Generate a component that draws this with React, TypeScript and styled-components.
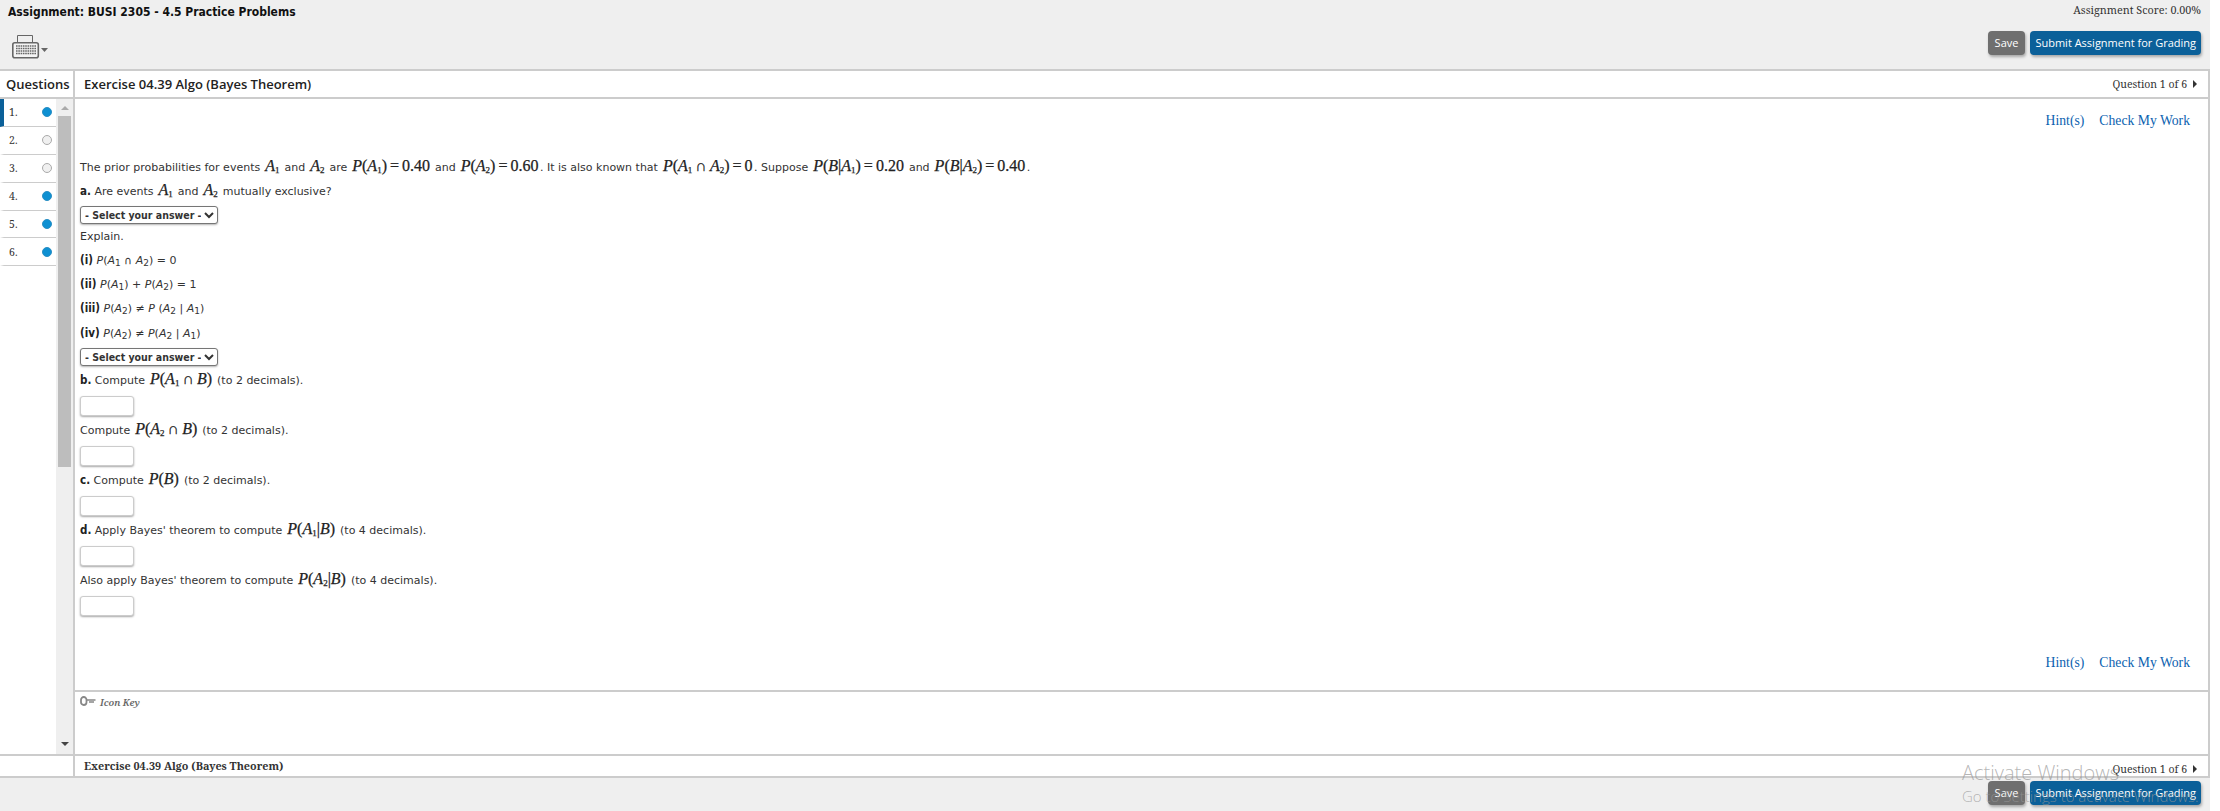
import React from "react";
import styled, { createGlobalStyle } from "styled-components";

const Global = createGlobalStyle`
  html, body { margin: 0; padding: 0; height: 100%; overflow: hidden; background: #fff; }
  #root { height: 100%; }
  * { box-sizing: border-box; }
`;

const sans = `"DejaVu Sans", sans-serif`;
const sansBold = `"DejaVu Sans Condensed", "DejaVu Sans", sans-serif`;
const heading = `"Open Sans", "Noto Sans", sans-serif`;
const serif = `"Liberation Serif", serif`;
const cambria = `"Noto Serif", "DejaVu Serif", "Liberation Serif", serif`;

const Page = styled.div`
  width: 2210px;
  height: 811px;
  position: relative;
  display: flex;
  flex-direction: column;
  font-family: ${sans};
  color: #333;
`;
const TopBar = styled.header`
  flex: none;
  height: 69px;
  background: #efefef;
  display: grid;
  grid-template-columns: 1fr auto;
  grid-template-rows: 28px 1fr;
  padding: 3px 9px 0 8px;
`;
const Title = styled.div`
  font: bold 12px/18px ${sansBold};
  color: #111;
`;
const Score = styled.div`
  font: 10.8px/14px ${cambria};
  color: #333;
  text-align: right;
`;
const Tools = styled.div`
  display: flex;
  align-items: flex-start;
  padding: 4px 0 0 4px;
`;
const Actions = styled.div<{ $top: number }>`
  display: flex;
  gap: 5px;
  justify-content: flex-end;
  align-self: start;
  padding-top: ${(p) => p.$top}px;
`;
const Btn = styled.button<{ $primary?: boolean }>`
  height: 24px;
  border: 0;
  border-radius: 4px;
  padding: 0 ${(p) => (p.$primary ? 5 : 7)}px;
  background: ${(p) => (p.$primary ? "#0b6099" : "#6f6f6f")};
  color: #fff;
  font: 400 11px/24px ${heading};
  box-shadow: 1px 2px 3px rgba(0, 0, 0, 0.3);
`;
const Frame = styled.div`
  flex: none;
  height: 709px;
  display: grid;
  grid-template-columns: 75px 1fr;
  grid-template-rows: 28px 657px 22px;
  border-top: 2px solid #ccc;
  border-right: 2px solid #ccc;
`;
const Cell = styled.div<{ $left?: boolean }>`
  border-bottom: 2px solid #ccc;
  ${(p) => (p.$left ? "border-right: 2px solid #ccc;" : "")}
`;
const QHead = styled(Cell)`
  font: 600 13px/27px ${heading};
  color: #222;
  padding-left: 6px;
`;
const ExHead = styled(Cell)`
  display: flex;
  justify-content: space-between;
  align-items: center;
  padding: 0 11px 0 9px;
`;
const ExTitle = styled.div`
  font: 600 13px/18px ${heading};
  color: #222;
`;
const ExSerif = styled.div`
  font: bold 10.8px/18px ${cambria};
  color: #333;
`;
const QCount = styled.div<{ $drop?: number }>`
  font: 10.5px/16px ${cambria};
  color: #333;
  display: flex;
  align-items: center;
  gap: 6px;
  margin-top: ${(p) => p.$drop ?? 0}px;
`;
const Tri = styled.span`
  width: 0;
  height: 0;
  border-left: 4px solid #333;
  border-top: 4px solid transparent;
  border-bottom: 4px solid transparent;
`;
const Side = styled.aside`
  border-right: 2px solid #ccc;
  border-bottom: 2px solid #ccc;
  display: flex;
  min-height: 0;
`;
const QList = styled.ol`
  list-style: none;
  margin: 0;
  padding: 0;
  width: 56px;
`;
const QItem = styled.li<{ $current?: boolean }>`
  height: 27.9px;
  border-bottom: 1px solid #ccc;
  border-left: 4px solid ${(p) => (p.$current ? "#0b6099" : "transparent")};
  padding: 0 4px 0 5px;
  display: flex;
  align-items: center;
  justify-content: space-between;
  font: 10.5px/16px ${cambria};
  color: #333;
`;
const Dot = styled.span<{ $on?: boolean }>`
  width: 10px;
  height: 10px;
  border-radius: 50%;
  background: ${(p) => (p.$on ? "#0e90d2" : "#f0f0f0")};
  border: 1px solid ${(p) => (p.$on ? "#2a8fc4" : "#aaa")};
`;
const Scroll = styled.div`
  width: 17px;
  background: #efefef;
  display: flex;
  flex-direction: column;
  align-items: center;
  justify-content: space-between;
  position: relative;
`;
const Thumb = styled.div`
  position: absolute;
  left: 2px;
  top: 17px;
  width: 13px;
  height: 351px;
  background: #bdbdbd;
`;
const ArrowUp = styled.span`
  margin-top: 7px;
  border-left: 4px solid transparent;
  border-right: 4px solid transparent;
  border-bottom: 4px solid #aaa;
`;
const ArrowDown = styled.span`
  margin-bottom: 8px;
  border-left: 4px solid transparent;
  border-right: 4px solid transparent;
  border-top: 4px solid #444;
`;
const Main = styled.main`
  border-bottom: 2px solid #ccc;
  display: flex;
  flex-direction: column;
  min-height: 0;
`;
const Links = styled.div<{ $top?: number; $bottom?: number }>`
  flex: none;
  display: flex;
  justify-content: flex-end;
  gap: 15px;
  padding: ${(p) => p.$top ?? 0}px 18px ${(p) => p.$bottom ?? 0}px 0;
  font: 13.7px/18px ${serif};
  color: #0b62b0;
`;
const Body = styled.div`
  flex: 1;
  padding: 27px 0 0 5px;
  display: flex;
  flex-direction: column;
  align-items: flex-start;
`;
const Line = styled.div`
  font: 11px/18px ${sans};
  color: #333;
  height: 18px;
  margin-bottom: 6.3px;
  white-space: pre;
`;
const TightLine = styled(Line)`
  margin-bottom: 5.3px;
`;
const Select = styled.select`
  width: 138px;
  height: 18px;
  margin: 0 0 4px;
  padding: 0;
  border: 1px solid #767676;
  border-radius: 3px;
  background: #fff;
  color: #333;
  font: bold 10.5px/15px ${sansBold};
  box-shadow: 0 1px 2px rgba(0, 0, 0, 0.3);
`;
const Field = styled.input`
  width: 54px;
  height: 20px;
  margin: 1.2px 0 4.5px;
  border: 1px solid #ccc;
  border-radius: 3px;
  background: #fff;
  box-shadow: 0 1px 2px rgba(0, 0, 0, 0.35);
`;
const B = styled.b`
  color: #222;
  font-family: ${sansBold};
  font-size: 11.5px;
`;
const Mth = styled.span`
  font: 400 16px/18px ${serif};
  color: #222;
  margin: 0 1.5px;
  -webkit-text-stroke: 0.25px #222;
`;
const Op = styled.span`
  margin: 0 3px;
`;
const Sub = styled.sub`
  font-size: 9px;
  line-height: 0;
  vertical-align: -2px;
`;
const Em = styled.i`
  font-style: italic;
`;
const KeyRow = styled.div`
  flex: none;
  height: 64px;
  border-top: 2px solid #ccc;
  padding: 3px 0 0 5px;
  display: flex;
  align-items: flex-start;
  gap: 4px;
  font: italic 600 9.5px/16px ${cambria};
  color: #666;
`;
const KeyGlyph = styled.svg`
  margin-top: 1px;
`;
const Bottom = styled.footer`
  flex: 1;
  background: #efefef;
  display: flex;
  justify-content: flex-end;
  padding-right: 9px;
`;
const Watermark = styled.div`
  position: absolute;
  left: 1962px;
  top: 760px;
  font-family: "Open Sans", sans-serif;
  font-weight: 300;
  color: rgba(150, 150, 150, 0.7);
  pointer-events: none;
  white-space: nowrap;
`;
const WmBig = styled.div`
  font-size: 20px;
  line-height: 26px;
`;
const WmSmall = styled.div`
  font-size: 15px;
  line-height: 20px;
`;

const A1 = () => (<><i>A</i><Sub>1</Sub></>);
const A2 = () => (<><i>A</i><Sub>2</Sub></>);
const P = () => <i>P</i>;
const Bv = () => <i>B</i>;
const Eq = () => <Op>=</Op>;

const Keyboard = () => (
  <svg width="38" height="24" viewBox="0 0 38 24" fill="none">
    <path d="M5.5 .5h15v7h-15z" fill="#efefef" stroke="#666" />
    <rect x=".8" y="7.8" width="25.5" height="15" rx="2" stroke="#666" strokeWidth="1.6" fill="#f4f4f4" />
    <path d="M4 11h20M4 13.5h20M4 16h20M4 18.5h20" stroke="#666" strokeWidth="1.6" strokeDasharray="1.6 .7" />
    <path d="M29 13h7l-3.5 4z" fill="#666" />
  </svg>
);
const KeyIcon = () => (
  <KeyGlyph width="16" height="10" viewBox="0 0 16 10">
    <rect x="1" y="1" width="5.5" height="8" rx="2.7" fill="none" stroke="#888" strokeWidth="1.8" />
    <path d="M6.5 4h9M9 6h5" stroke="#888" strokeWidth="1.3" />
  </KeyGlyph>
);

const rows = [true, false, false, true, true, true];

export default function App() {
  return (
    <Page>
      <Global />
      <TopBar>
        <Title>Assignment: BUSI 2305 - 4.5 Practice Problems</Title>
        <Score>Assignment Score: 0.00%</Score>
        <Tools><Keyboard /></Tools>
        <Actions $top={0}>
          <Btn>Save</Btn>
          <Btn $primary>Submit Assignment for Grading</Btn>
        </Actions>
      </TopBar>
      <Frame>
        <QHead $left>Questions</QHead>
        <ExHead>
          <ExTitle>Exercise 04.39 Algo (Bayes Theorem)</ExTitle>
          <QCount>Question 1 of 6 <Tri /></QCount>
        </ExHead>
        <Side>
          <QList>
            {rows.map((on, i) => (
              <QItem key={i} $current={i === 0}>
                {i + 1}.<Dot $on={on} />
              </QItem>
            ))}
          </QList>
          <Scroll>
            <ArrowUp />
            <Thumb />
            <ArrowDown />
          </Scroll>
        </Side>
        <Main>
          <Links $top={13}>
            <span>Hint(s)</span><span>Check My Work</span>
          </Links>
          <Body>
            <Line>The prior probabilities for events <Mth><A1 /></Mth> and <Mth><A2 /></Mth> are <Mth><P />(<A1 />)<Eq />0.40</Mth> and <Mth><P />(<A2 />)<Eq />0.60</Mth>. It is also known that <Mth><P />(<A1 /><Op>∩</Op><A2 />)<Eq />0</Mth>. Suppose <Mth><P />(<Bv />|<A1 />)<Eq />0.20</Mth> and <Mth><P />(<Bv />|<A2 />)<Eq />0.40</Mth>.</Line>
            <Line><B>a.</B> Are events <Mth><A1 /></Mth> and <Mth><A2 /></Mth> mutually exclusive?</Line>
            <Select><option>- Select your answer -</option></Select>
            <TightLine>Explain.</TightLine>
            <Line><B>(i)</B> <Em>P</Em>(<Em>A</Em><Sub>1</Sub> ∩ <Em>A</Em><Sub>2</Sub>) = 0</Line>
            <Line><B>(ii)</B> <Em>P</Em>(<Em>A</Em><Sub>1</Sub>) + <Em>P</Em>(<Em>A</Em><Sub>2</Sub>) = 1</Line>
            <Line><B>(iii)</B> <Em>P</Em>(<Em>A</Em><Sub>2</Sub>) ≠ <Em>P</Em> (<Em>A</Em><Sub>2</Sub> | <Em>A</Em><Sub>1</Sub>)</Line>
            <Line><B>(iv)</B> <Em>P</Em>(<Em>A</Em><Sub>2</Sub>) ≠ <Em>P</Em>(<Em>A</Em><Sub>2</Sub> | <Em>A</Em><Sub>1</Sub>)</Line>
            <Select><option>- Select your answer -</option></Select>
            <Line><B>b.</B> Compute <Mth><P />(<A1 /><Op>∩</Op><Bv />)</Mth> (to 2 decimals).</Line>
            <Field />
            <Line>Compute <Mth><P />(<A2 /><Op>∩</Op><Bv />)</Mth> (to 2 decimals).</Line>
            <Field />
            <Line><B>c.</B> Compute <Mth><P />(<Bv />)</Mth> (to 2 decimals).</Line>
            <Field />
            <Line><B>d.</B> Apply Bayes' theorem to compute <Mth><P />(<A1 />|<Bv />)</Mth> (to 4 decimals).</Line>
            <Field />
            <Line>Also apply Bayes' theorem to compute <Mth><P />(<A2 />|<Bv />)</Mth> (to 4 decimals).</Line>
            <Field />
          </Body>
          <Links $bottom={18}>
            <span>Hint(s)</span><span>Check My Work</span>
          </Links>
          <KeyRow><KeyIcon /> Icon Key</KeyRow>
        </Main>
        <Cell $left />
        <ExHead>
          <ExSerif>Exercise 04.39 Algo (Bayes Theorem)</ExSerif>
          <QCount $drop={5}>Question 1 of 6 <Tri /></QCount>
        </ExHead>
      </Frame>
      <Bottom>
        <Actions $top={3}>
          <Btn>Save</Btn>
          <Btn $primary>Submit Assignment for Grading</Btn>
        </Actions>
      </Bottom>
      <Watermark>
        <WmBig>Activate Windows</WmBig>
        <WmSmall>Go to Settings to activate Windows.</WmSmall>
      </Watermark>
    </Page>
  );
}
